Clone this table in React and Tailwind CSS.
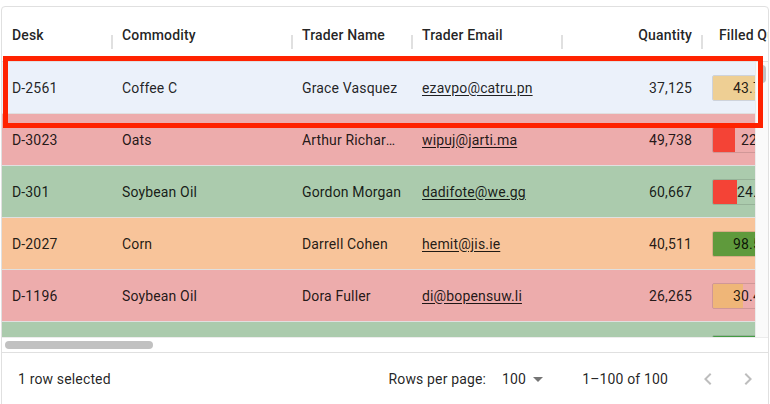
import React from "react";

const cols = [
  { key: "desk", title: "Desk", w: "w-[110px]", align: "left" },
  { key: "commodity", title: "Commodity", w: "w-[180px]", align: "left" },
  { key: "trader", title: "Trader Name", w: "w-[120px]", align: "left" },
  { key: "email", title: "Trader Email", w: "w-[150px]", align: "left" },
  { key: "qty", title: "Quantity", w: "w-[140px]", align: "right" },
  { key: "filled", title: "Filled Quantity", w: "w-[120px]", align: "right" },
];

const rows = [
  { desk: "D-2561", commodity: "Coffee C", trader: "Grace Vasquez", email: "ezavpo@catru.pn", qty: "37,125", filled: 43.743, bg: "bg-[#ebf1fa]" },
  { desk: "D-3023", commodity: "Oats", trader: "Arthur Richards", email: "wipuj@jarti.ma", qty: "49,738", filled: 22.4, bg: "bg-[#edacac]", tight: true },
  { desk: "D-301", commodity: "Soybean Oil", trader: "Gordon Morgan", email: "dadifote@we.gg", qty: "60,667", filled: 24.35, bg: "bg-[#abcbad]" },
  { desk: "D-2027", commodity: "Corn", trader: "Darrell Cohen", email: "hemit@jis.ie", qty: "40,511", filled: 98.512, bg: "bg-[#f8c49a]" },
  { desk: "D-1196", commodity: "Soybean Oil", trader: "Dora Fuller", email: "di@bopensuw.li", qty: "26,265", filled: 30.417, bg: "bg-[#edacac]" },
  { desk: "D-4410", commodity: "Wheat", trader: "Lena Parker", email: "ugo@wo.ki", qty: "31,802", filled: 88.21, bg: "bg-[#abcbad]" },
];

function fillClass(v) {
  if (v < 30) return "bg-[#f44336]";
  if (v < 70) return "bg-[#efbb5aa3]";
  return "bg-[#088208a3]";
}

function Progress({ value }) {
  return (
    <div className="w-[100px] h-[26px] shrink-0 border border-[rgba(0,0,0,0.12)] rounded-[2px] overflow-hidden grid">
      <div className="[grid-area:1/1] h-full">
        <div className={`h-full ${fillClass(value)}`} style={{ width: `${value}%` }} />
      </div>
      <div className="[grid-area:1/1] flex items-center justify-center leading-[24px] whitespace-nowrap">
        {`${value.toLocaleString("en-US")} %`}
      </div>
    </div>
  );
}

function Separator() {
  return <div className="absolute right-[-1px] top-[28px] w-[2px] h-[14px] bg-[#e0e0e0]" />;
}

export default function App() {
  return (
    <div className="relative w-[770px] h-[404px] overflow-hidden bg-white font-['Roboto',sans-serif] text-sm tracking-[0.01071em] text-[rgba(0,0,0,0.87)]">
      <div className="ml-px mt-[6px] w-[768px] h-[420px] border border-[#e0e0e0] rounded-t-[4px] flex flex-col overflow-hidden">
        {/* Header */}
        <div className="h-[55px] shrink-0 border-b border-[#e0e0e0] flex overflow-hidden">
          {cols.map((c, i) => (
            <div
              key={c.key}
              className={`${c.w} shrink-0 relative flex items-center px-[10px] pt-[2px] font-medium whitespace-nowrap ${
                c.align === "right" ? "justify-end" : ""
              } ${c.key === "filled" ? "!justify-start pl-[17px]" : ""}`}
            >
              <span>{c.title}</span>
              {i < cols.length - 1 && <Separator />}
            </div>
          ))}
        </div>

        {/* Body */}
        <div className="h-[275px] shrink-0 flex">
          <div className="flex-1 overflow-hidden">
            {rows.map((r) => (
              <div key={r.desk} className={`h-[52px] border-b border-[#e0e0e0] flex ${r.bg}`}>
                <div className="w-[110px] shrink-0 px-[10px] flex items-center">{r.desk}</div>
                <div className="w-[180px] shrink-0 px-[10px] flex items-center">{r.commodity}</div>
                <div className="w-[120px] shrink-0 px-[10px] flex items-center min-w-0">
                  <span className={`truncate ${r.tight ? "max-w-[96px]" : "max-w-[100px]"}`}>{r.trader}</span>
                </div>
                <div className="w-[150px] shrink-0 px-[10px] flex items-center">
                  <span className="underline underline-offset-[2px]">{r.email}</span>
                </div>
                <div className="w-[140px] shrink-0 px-[10px] flex items-center justify-end">{r.qty}</div>
                <div className="w-[120px] shrink-0 px-[10px] flex items-center">
                  <Progress value={r.filled} />
                </div>
              </div>
            ))}
          </div>
          <div className="w-[13px] shrink-0 bg-[#fafafa] border-l border-[#ececec] pt-[3px] flex justify-center">
            <div className="w-[8px] h-[18px] rounded-full bg-[#c1c1c1]" />
          </div>
        </div>

        {/* Horizontal scrollbar */}
        <div className="h-[15px] shrink-0 border-t border-[#ececec] bg-white flex items-center pl-[3px]">
          <div className="w-[148px] h-[8px] rounded-full bg-[#c1c1c1]" />
        </div>

        {/* Footer */}
        <div className="h-[53px] shrink-0 border-t border-[#e0e0e0] flex items-center justify-between">
          <div className="pl-4">1 row selected</div>
          <div className="flex items-center">
            <span>Rows per page:</span>
            <div className="ml-2 mr-8 relative pl-2 pr-6 flex items-center">
              <span>100</span>
              <svg viewBox="0 0 24 24" className="absolute right-0 top-1/2 -translate-y-1/2 w-6 h-6 fill-[rgba(0,0,0,0.54)]">
                <path d="M7 10l5 5 5-5z" />
              </svg>
            </div>
            <span>1–100 of 100</span>
            <div className="ml-5 flex">
              <div className="w-10 h-10 flex items-center justify-center">
                <svg viewBox="0 0 24 24" className="w-6 h-6 fill-[rgba(0,0,0,0.26)]">
                  <path d="M15.41 16.59 10.83 12l4.58-4.59L14 6l-6 6 6 6z" />
                </svg>
              </div>
              <div className="w-10 h-10 flex items-center justify-center">
                <svg viewBox="0 0 24 24" className="w-6 h-6 fill-[rgba(0,0,0,0.26)]">
                  <path d="M8.59 16.59 13.17 12 8.59 7.41 10 6l6 6-6 6z" />
                </svg>
              </div>
            </div>
          </div>
        </div>
      </div>

      {/* Annotation highlight */}
      <div className="absolute left-[3px] top-[56px] w-[760px] h-[72px] border-[5px] border-[#ff2200] pointer-events-none" />
    </div>
  );
}
